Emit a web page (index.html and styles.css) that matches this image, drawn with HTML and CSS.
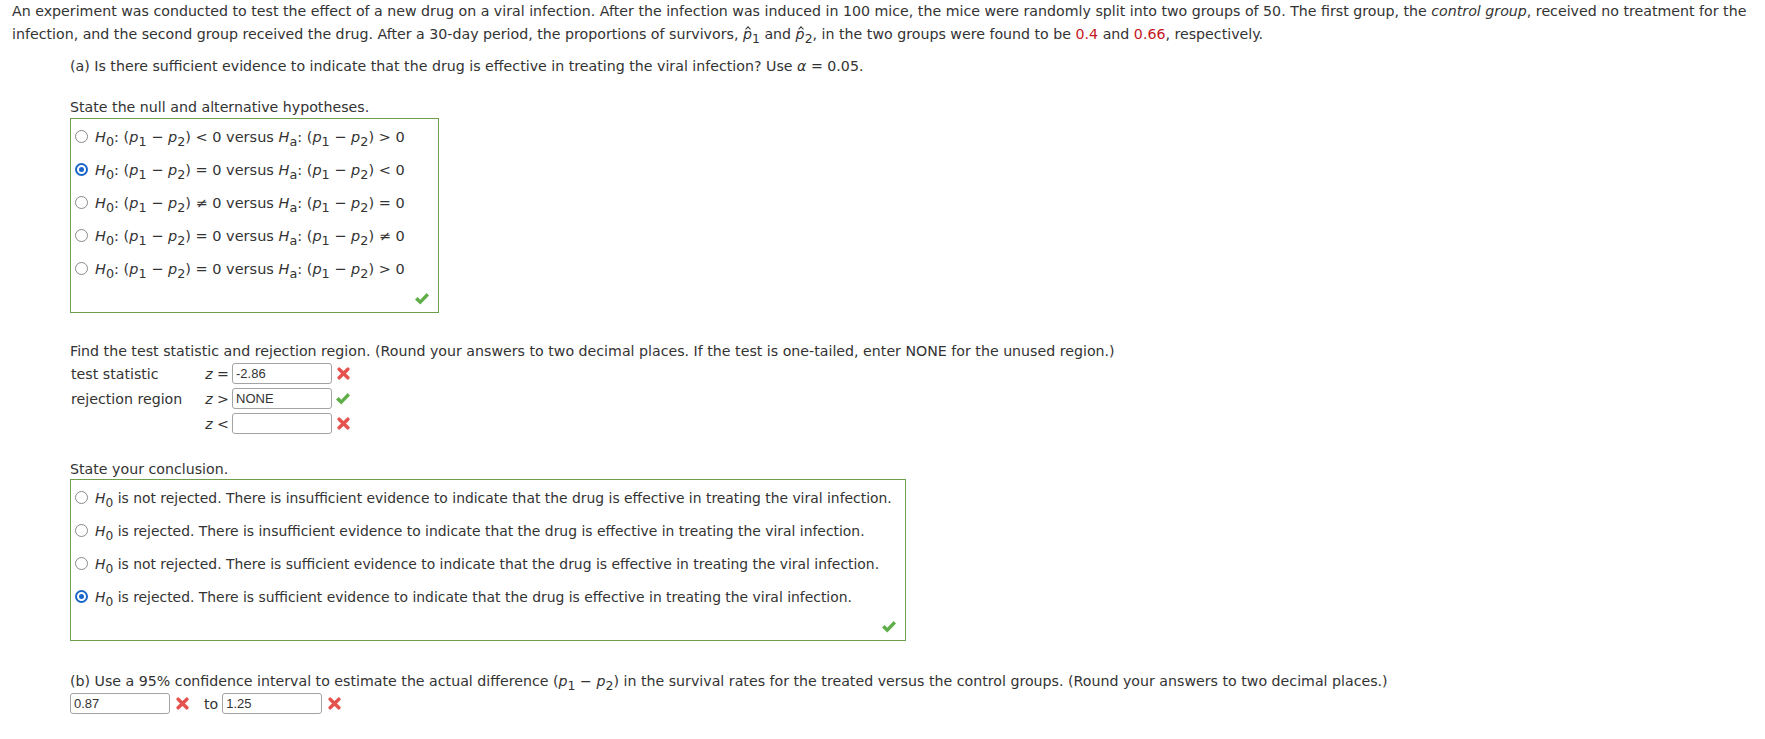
FILE: index.html
```html
<!DOCTYPE html>
<html>
<head>
<meta charset="utf-8">
<link rel="stylesheet" href="styles.css">
</head>
<body>
<div class="page">
  <p class="intro">An experiment was conducted to test the effect of a new drug on a viral infection. After the infection was induced in 100 mice, the mice were randomly split into two groups of 50. The first group, the <i>control group</i>, received no treatment for the infection, and the second group received the drug. After a 30-day period, the proportions of survivors, <i class="phat">p</i><sub>1</sub> and <i class="phat">p</i><sub>2</sub>, in the two groups were found to be <span class="red">0.4</span> and <span class="red">0.66</span>, respectively.</p>

  <div class="part">
    <p class="qa">(a) Is there sufficient evidence to indicate that the drug is effective in treating the viral infection? Use <i>α</i> = 0.05.</p>

    <p class="label lab-hyp">State the null and alternative hypotheses.</p>
    <div class="choices hyp">
      <div class="opt"><span class="radio"></span><span class="txt"><i>H</i><sub>0</sub>: (<i>p</i><sub>1</sub> − <i>p</i><sub>2</sub>) &lt; 0 versus <i>H</i><sub>a</sub>: (<i>p</i><sub>1</sub> − <i>p</i><sub>2</sub>) &gt; 0</span></div>
      <div class="opt"><span class="radio on"></span><span class="txt"><i>H</i><sub>0</sub>: (<i>p</i><sub>1</sub> − <i>p</i><sub>2</sub>) = 0 versus <i>H</i><sub>a</sub>: (<i>p</i><sub>1</sub> − <i>p</i><sub>2</sub>) &lt; 0</span></div>
      <div class="opt"><span class="radio"></span><span class="txt"><i>H</i><sub>0</sub>: (<i>p</i><sub>1</sub> − <i>p</i><sub>2</sub>) ≠ 0 versus <i>H</i><sub>a</sub>: (<i>p</i><sub>1</sub> − <i>p</i><sub>2</sub>) = 0</span></div>
      <div class="opt"><span class="radio"></span><span class="txt"><i>H</i><sub>0</sub>: (<i>p</i><sub>1</sub> − <i>p</i><sub>2</sub>) = 0 versus <i>H</i><sub>a</sub>: (<i>p</i><sub>1</sub> − <i>p</i><sub>2</sub>) ≠ 0</span></div>
      <div class="opt"><span class="radio"></span><span class="txt"><i>H</i><sub>0</sub>: (<i>p</i><sub>1</sub> − <i>p</i><sub>2</sub>) = 0 versus <i>H</i><sub>a</sub>: (<i>p</i><sub>1</sub> − <i>p</i><sub>2</sub>) &gt; 0</span></div>
      <div class="markrow"><svg class="ok" viewBox="0 0 16 14" width="16" height="14"><path d="M1 7.5 L3.6 5 L6.3 7.8 L12.6 1 L15 3.4 L6.3 12.6 Z" fill="#5fae4a"/></svg></div>
    </div>

    <p class="label lab-find">Find the test statistic and rejection region. (Round your answers to two decimal places. If the test is one-tailed, enter NONE for the unused region.)</p>
    <div class="grid">
      <span class="rl">test statistic</span>
      <span class="zl"><i>z</i> =</span>
      <span class="inp">-2.86</span>
      <svg class="bad" viewBox="0 0 12 12" width="13" height="13"><path d="M2 2 L10 10 M10 2 L2 10" stroke="#e5534f" stroke-width="3.2" stroke-linecap="round"/></svg>

      <span class="rl">rejection region</span>
      <span class="zl"><i>z</i> &gt;</span>
      <span class="inp">NONE</span>
      <svg class="ok" viewBox="0 0 16 14" width="16" height="14"><path d="M1 7.5 L3.6 5 L6.3 7.8 L12.6 1 L15 3.4 L6.3 12.6 Z" fill="#5fae4a"/></svg>

      <span class="rl"></span>
      <span class="zl"><i>z</i> &lt;</span>
      <span class="inp"></span>
      <svg class="bad" viewBox="0 0 12 12" width="13" height="13"><path d="M2 2 L10 10 M10 2 L2 10" stroke="#e5534f" stroke-width="3.2" stroke-linecap="round"/></svg>
    </div>

    <p class="label lab-conc">State your conclusion.</p>
    <div class="choices conc">
      <div class="opt"><span class="radio"></span><span class="txt"><i>H</i><sub>0</sub> is not rejected. There is insufficient evidence to indicate that the drug is effective in treating the viral infection.</span></div>
      <div class="opt"><span class="radio"></span><span class="txt"><i>H</i><sub>0</sub> is rejected. There is insufficient evidence to indicate that the drug is effective in treating the viral infection.</span></div>
      <div class="opt"><span class="radio"></span><span class="txt"><i>H</i><sub>0</sub> is not rejected. There is sufficient evidence to indicate that the drug is effective in treating the viral infection.</span></div>
      <div class="opt"><span class="radio on"></span><span class="txt"><i>H</i><sub>0</sub> is rejected. There is sufficient evidence to indicate that the drug is effective in treating the viral infection.</span></div>
      <div class="markrow"><svg class="ok" viewBox="0 0 16 14" width="16" height="14"><path d="M1 7.5 L3.6 5 L6.3 7.8 L12.6 1 L15 3.4 L6.3 12.6 Z" fill="#5fae4a"/></svg></div>
    </div>

    <p class="label lab-b">(b) Use a 95% confidence interval to estimate the actual difference (<i>p</i><sub>1</sub> − <i>p</i><sub>2</sub>) in the survival rates for the treated versus the control groups. (Round your answers to two decimal places.)</p>
    <div class="ci">
      <span class="inp">0.87</span>
      <svg class="bad" viewBox="0 0 12 12" width="13" height="13"><path d="M2 2 L10 10 M10 2 L2 10" stroke="#e5534f" stroke-width="3.2" stroke-linecap="round"/></svg>
      <span class="to">to</span>
      <span class="inp">1.25</span>
      <svg class="bad" viewBox="0 0 12 12" width="13" height="13"><path d="M2 2 L10 10 M10 2 L2 10" stroke="#e5534f" stroke-width="3.2" stroke-linecap="round"/></svg>
    </div>
  </div>
</div>
</body>
</html>
```

FILE: styles.css
```css
html, body {
  margin: 0;
  padding: 0;
  background: #ffffff;
}
body {
  font-family: "DejaVu Sans", Verdana, sans-serif;
  font-size: 14.2px;
  color: #333333;
}
.page {
  padding: 0 8px 0 12px;
}
p {
  margin: 0;
}
sub {
  font-size: 0.88em;
  vertical-align: -0.35em;
  line-height: 0;
}
.phat {
  position: relative;
}
.phat::before {
  content: "";
  position: absolute;
  top: 1px;
  left: 3px;
  width: 3px;
  height: 3px;
  border-left: 1px solid #333;
  border-top: 1px solid #333;
  transform: rotate(45deg);
}
.red {
  color: #c4161c;
}
.intro {
  line-height: 23px;
}
.part {
  margin-left: 58px;
}
.qa {
  margin-top: 9px;
  line-height: 23px;
}
.label {
  line-height: 21px;
}
.lab-hyp {
  margin-top: 19px;
}
.choices {
  border: 1px solid #6f9e4c;
  padding-top: 1px;
  box-sizing: border-box;
}
.hyp {
  width: 369px;
  font-size: 14.5px;
}
.conc {
  width: 836px;
  font-size: 13.9px;
}
.opt {
  display: flex;
  align-items: center;
  height: 33px;
  padding-left: 4px;
  white-space: nowrap;
}
.radio {
  width: 13px;
  height: 13px;
  box-sizing: border-box;
  border: 1.6px solid #8a8a8a;
  border-radius: 50%;
  background: #fff;
  margin-right: 7px;
  display: flex;
  align-items: center;
  justify-content: center;
  flex: none;
}
.radio.on {
  border: 2px solid #1b66c9;
}
.radio.on::after {
  content: "";
  width: 5px;
  height: 5px;
  border-radius: 50%;
  background: #1b66c9;
}
.markrow {
  height: 27px;
  display: flex;
  justify-content: flex-end;
  align-items: center;
  padding-right: 8px;
}
.lab-find {
  margin-top: 28px;
  line-height: 20px;
}
.grid {
  display: grid;
  grid-template-columns: 132px 30px 100px 22px;
  grid-auto-rows: 25px;
  align-items: center;
  justify-items: start;
}
.rl {
  padding-left: 1px;
}
.zl {
  justify-self: end;
  padding-right: 3px;
}
.inp {
  display: flex;
  align-items: center;
  width: 100px;
  height: 21px;
  box-sizing: border-box;
  border: 1px solid #a3a3a3;
  border-radius: 3px;
  padding-left: 3px;
  font-family: "Liberation Sans", Arial, sans-serif;
  font-size: 13px;
  color: #333;
  background: #fff;
}
.grid .bad, .grid .ok {
  justify-self: center;
}
.lab-conc {
  margin-top: 23px;
  line-height: 20px;
}
.lab-b {
  margin-top: 29px;
  line-height: 22px;
}
.ci {
  display: flex;
  align-items: center;
  height: 23px;
}
.ci .bad {
  margin: 0 5px 0 6px;
}
.ci .to {
  margin: 0 4px 0 10px;
}
```
